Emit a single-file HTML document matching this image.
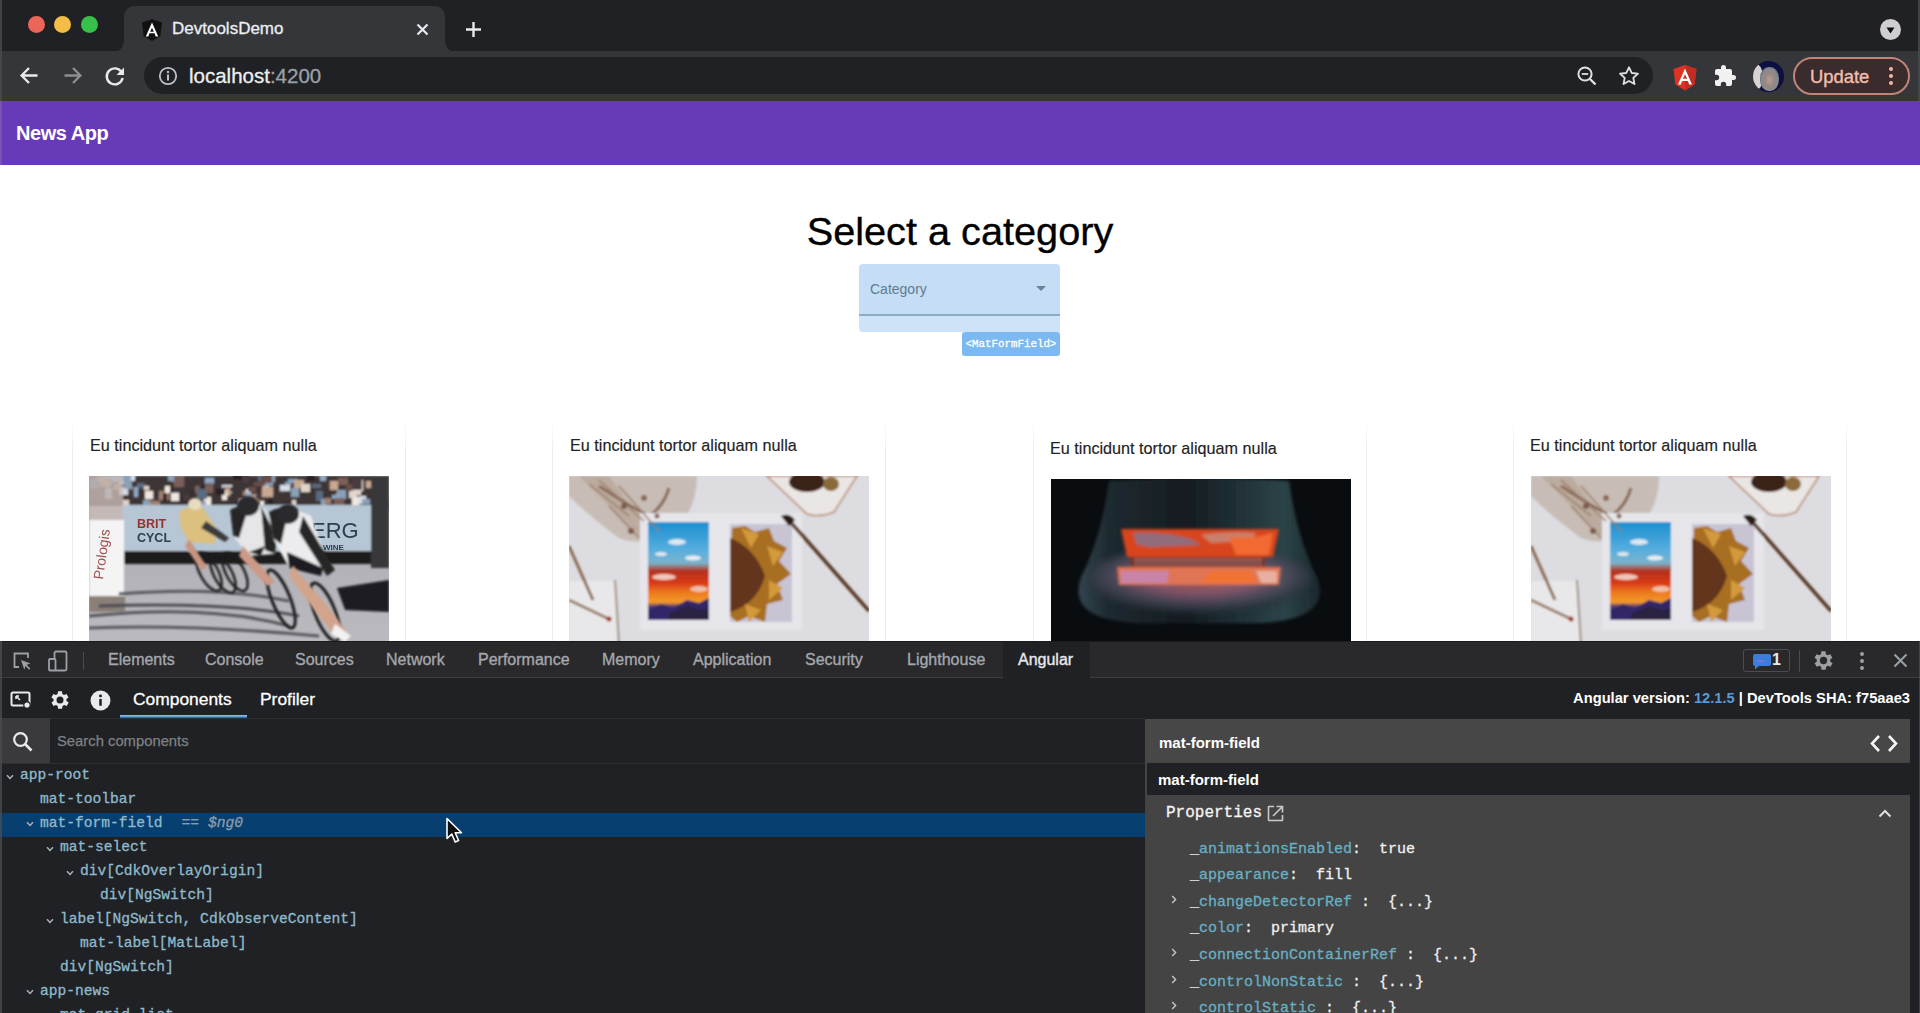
<!DOCTYPE html>
<html><head><meta charset="utf-8"><style>
*{box-sizing:border-box;margin:0;padding:0}
html,body{width:1920px;height:1013px;overflow:hidden;background:#fff;font-family:"Liberation Sans",sans-serif}
.a{position:absolute}
.mono{font-family:"Liberation Mono",monospace}
/* chrome */
#tabstrip{left:0;top:0;width:1920px;height:51px;background:#202124}
#toolbar{left:0;top:51px;width:1920px;height:50px;background:#35363a}
.tl{width:15px;height:15px;border-radius:50%;top:17px}
#tab{left:124px;top:6px;width:321px;height:46px;background:#35363a;border-radius:10px 10px 0 0}
#tab:before,#tab:after{content:"";position:absolute;bottom:0;width:10px;height:10px;background:radial-gradient(circle at 0 0,transparent 10px,#35363a 10.5px)}
#tab:before{left:-10px;background:radial-gradient(circle at 0 0,transparent 9.5px,#35363a 10px)}
#tab:after{right:-10px;background:radial-gradient(circle at 100% 0,transparent 9.5px,#35363a 10px)}
#omni{left:144px;top:57px;width:1509px;height:37px;background:#202124;border-radius:19px}
#appbar{left:0;top:101px;width:1920px;height:64px;background:#673ab7}
/* devtools */
#dt{left:0;top:641px;width:1920px;height:372px;background:#202124}
#dtbar{left:0;top:0;width:1920px;height:37px;background:#29292c;border-top:1px solid #1b1b1d;border-bottom:1px solid #3e3e40}
.dtab{top:0;height:36px;line-height:36px;font-size:16px;color:#a4a7ab;-webkit-text-stroke:0.35px currentColor}
.card{width:334px;height:260px;background:linear-gradient(to bottom,#fff,#ededed 30px) left top/1px 100% no-repeat,linear-gradient(to bottom,#fff,#ededed 30px) right top/1px 100% no-repeat}
.ctitle{font-size:16.2px;line-height:20px;color:#222;white-space:nowrap;-webkit-text-stroke:0.15px currentColor}
.img{width:300px;height:200px;overflow:hidden}
.trow{font-family:"Liberation Mono",monospace;font-size:14.6px;line-height:24px;color:#8fbacc;white-space:nowrap;-webkit-text-stroke:0.3px currentColor}
.prow{font-family:"Liberation Mono",monospace;font-size:15px;line-height:20px;color:#f0f0f0;white-space:pre;-webkit-text-stroke:0.3px currentColor}
.pk{color:#68b0c2}
</style></head><body>
<div class="a" id="tabstrip">
  <div class="a tl" style="left:28px;top:16px;width:17px;height:17px;background:#ec6559"></div>
  <div class="a tl" style="left:54px;top:16px;width:17px;height:17px;background:#f4bd46"></div>
  <div class="a tl" style="left:81px;top:16px;width:17px;height:17px;background:#37c04a"></div>
  <div class="a" id="tab">
    <svg class="a" style="left:17px;top:13px" width="22" height="24" viewBox="0 0 22 24"><path d="M11 0L21 3.6 19.4 17 11 22 2.6 17 1 3.6Z" fill="#111"/><path d="M11 3.5L4.8 17.5h2.5l1.2-3.2h5l1.2 3.2h2.5L11 3.5zm0 5.2l1.8 4H9.2z" fill="#fff"/></svg>
    <div class="a" style="left:48px;top:13.3px;font-size:17px;line-height:20px;color:#eceef0;-webkit-text-stroke:0.3px currentColor">DevtoolsDemo</div>
    <svg class="a" style="left:292px;top:17px" width="13" height="13" viewBox="0 0 13 13"><path d="M1.5 1.5L11.5 11.5M11.5 1.5L1.5 11.5" stroke="#e8eaed" stroke-width="2.2"/></svg>
  </div>
  <svg class="a" style="left:465px;top:21px" width="17" height="17" viewBox="0 0 17 17"><path d="M8.5 1V16M1 8.5H16" stroke="#e8eaed" stroke-width="2.4"/></svg>
  <div class="a" style="left:1880px;top:19px;width:21px;height:21px;border-radius:50%;background:#cfcfd1"></div>
  <svg class="a" style="left:1885px;top:26px" width="11" height="9" viewBox="0 0 11 9"><path d="M1.5 1.5H9.5L5.5 7.5Z" fill="#111"/></svg>
</div>
<div class="a" id="toolbar">
  <svg class="a" style="left:19px;top:14px" width="21" height="21" viewBox="0 0 21 21"><path d="M18.5 10.5H3M10 3L2.6 10.5 10 18" stroke="#e8eaed" stroke-width="2.3" fill="none"/></svg>
  <svg class="a" style="left:62px;top:14px" width="21" height="21" viewBox="0 0 21 21"><path d="M2.5 10.5H18M11 3L18.4 10.5 11 18" stroke="#8e8f92" stroke-width="2.3" fill="none"/></svg>
  <svg class="a" style="left:104px;top:14px" width="22" height="22" viewBox="0 0 22 22"><path d="M17.6 7.2A8 8 0 1 0 18.6 13" stroke="#e8eaed" stroke-width="2.4" fill="none"/><path d="M20 2.5V10H12.5Z" fill="#e8eaed"/></svg>
</div>
<div class="a" id="omni">
  <svg class="a" style="left:14px;top:9px" width="20" height="20" viewBox="0 0 20 20"><circle cx="10" cy="10" r="8.2" stroke="#bdc1c6" stroke-width="1.8" fill="none"/><path d="M10 8.6V14.6" stroke="#bdc1c6" stroke-width="2"/><circle cx="10" cy="6" r="1.2" fill="#bdc1c6"/></svg>
  <div class="a" style="left:45px;top:7px;font-size:20.5px;line-height:24px;color:#eceef0;white-space:nowrap;-webkit-text-stroke:0.3px currentColor">localhost<span style="color:#9aa0a6">:4200</span></div>
  <svg class="a" style="left:1432px;top:8px" width="22" height="22" viewBox="0 0 22 22"><circle cx="9" cy="9" r="6.6" stroke="#e0e0e0" stroke-width="2" fill="none"/><path d="M14 14L19.5 19.5" stroke="#e0e0e0" stroke-width="2.4"/><path d="M5.8 9H12.2" stroke="#e0e0e0" stroke-width="1.8"/></svg>
  <svg class="a" style="left:1474px;top:8px" width="22" height="22" viewBox="0 0 24 24"><path d="M12 2.5l2.9 6.2 6.8.8-5 4.6 1.3 6.7L12 17.5l-6 3.3 1.3-6.7-5-4.6 6.8-.8z" stroke="#e0e0e0" stroke-width="2" fill="none" stroke-linejoin="round"/></svg>
</div>
<svg class="a" style="left:1672px;top:64px" width="26" height="28" viewBox="0 0 26 28"><path d="M13 1L24.5 5 22.6 20.5 13 26.5 3.4 20.5 1.5 5Z" fill="#dd3324"/><path d="M13 1L24.5 5 22.6 20.5 13 26.5Z" fill="#c12d22"/><path d="M13 4.5L6 20.5h2.8l1.4-3.6h5.6l1.4 3.6H20L13 4.5zm0 5.8l2.1 4.5H10.9z" fill="#fff"/></svg>
<svg class="a" style="left:1713px;top:64px" width="24" height="24" viewBox="0 0 24 24"><path d="M20.5 11H19V7a2 2 0 0 0-2-2h-4V3.5a2.5 2.5 0 0 0-5 0V5H4a2 2 0 0 0-2 2v3.8h1.5a2.7 2.7 0 0 1 0 5.4H2V20a2 2 0 0 0 2 2h3.8v-1.5a2.7 2.7 0 0 1 5.4 0V22H17a2 2 0 0 0 2-2v-4h1.5a2.5 2.5 0 0 0 0-5z" fill="#f1f1f1"/></svg>
<div class="a" style="left:1753px;top:61px;width:31px;height:31px;border-radius:50%;overflow:hidden;background:#0c0f40"><div class="a" style="left:-4px;top:3px;width:14px;height:26px;border-radius:50%;background:#d8d4d4"></div><div class="a" style="left:7px;top:6px;width:19px;height:24px;border-radius:45%;background:radial-gradient(ellipse at 50% 55%,#b89c94 0,#968880 5px,#8a8a90 8px,#505a70 11px)"></div></div>
<div class="a" style="left:1793px;top:57px;width:117px;height:38px;border-radius:19px;border:2px solid #c08478;background:#3a2b2c"></div>
<div class="a" style="left:1810px;top:65px;font-size:18.4px;line-height:24px;color:#f1bcae;-webkit-text-stroke:0.4px currentColor">Update</div>
<svg class="a" style="left:1886px;top:65px" width="10" height="22" viewBox="0 0 10 22"><circle cx="5" cy="4" r="2" fill="#f2b8a9"/><circle cx="5" cy="11" r="2" fill="#f2b8a9"/><circle cx="5" cy="18" r="2" fill="#f2b8a9"/></svg>
<div class="a" id="appbar"><div class="a" style="left:16px;top:20px;font-size:20px;line-height:24px;color:#fff;font-weight:bold;letter-spacing:-0.45px">News App</div></div>
<div class="a" id="page" style="left:0;top:165px;width:1920px;height:476px;background:#fff;overflow:hidden">
  <div class="a" id="h1" style="left:0;top:41px;width:1920px;text-align:center;font-size:39.7px;line-height:50px;color:#000;-webkit-text-stroke:0.35px #000">Select a category</div>
  <div class="a" style="left:859px;top:99px;width:201px;height:52px;background:#c5ddf5;border-radius:4px 4px 0 0"></div>
  <div class="a" style="left:859px;top:149px;width:201px;height:1.5px;background:#8bacc4"></div>
  <div class="a" style="left:859px;top:151px;width:201px;height:16px;background:#cce3f8;border-radius:0 0 0 4px"></div>
  <div class="a" id="cat" style="left:870px;top:115px;font-size:14px;line-height:18px;color:#5e7c8e">Category</div>
  <svg class="a" style="left:1036px;top:121px" width="10" height="5" viewBox="0 0 10 5"><path d="M0 0H10L5 5Z" fill="#6a8496"/></svg>
  <div class="a" style="left:962px;top:167px;width:98px;height:24px;background:#7bb9f0;border-radius:3px;color:#fff;font-family:'Liberation Mono',monospace;font-size:10.8px;line-height:24px;text-align:center;-webkit-text-stroke:0.3px #fff">&lt;MatFormField&gt;</div>
  <div class="a card" style="left:72px;top:253px"></div>
  <div class="a card" style="left:552px;top:253px"></div>
  <div class="a card" style="left:1033px;top:253px"></div>
  <div class="a card" style="left:1513px;top:253px"></div>
  <div class="a ctitle" style="left:90px;top:269.5px">Eu tincidunt tortor aliquam nulla</div>
  <div class="a ctitle" style="left:570px;top:269.5px">Eu tincidunt tortor aliquam nulla</div>
  <div class="a ctitle" style="left:1050px;top:272.5px">Eu tincidunt tortor aliquam nulla</div>
  <div class="a ctitle" style="left:1530px;top:269.5px">Eu tincidunt tortor aliquam nulla</div>
  <div class="a img" id="img1" style="left:89px;top:311px;background:#b3b3ba"><svg width="300" height="200" viewBox="0 0 300 200">
<defs><filter id="b1" x="-10%" y="-10%" width="120%" height="120%"><feGaussianBlur stdDeviation="1.3"/></filter>
<filter id="b1s" x="-10%" y="-10%" width="120%" height="120%"><feGaussianBlur stdDeviation="0.5"/></filter>
<linearGradient id="road1" x1="0" y1="0" x2="0" y2="1"><stop offset="0" stop-color="#a9a9b0"/><stop offset="1" stop-color="#bdbdc2"/></linearGradient></defs>
<rect width="300" height="200" fill="url(#road1)"/>
<g filter="url(#b1)">
<rect x="0" y="0" width="300" height="30" fill="#3e3434"/><rect x="130" y="13" width="10" height="7" fill="#4a3a40"/><rect x="249" y="2" width="10" height="7" fill="#7a6058"/><rect x="231" y="-0" width="6" height="5" fill="#90a8c8"/><rect x="260" y="15" width="8" height="7" fill="#e0d4cc"/><rect x="190" y="14" width="5" height="4" fill="#4a3a40"/><rect x="15" y="-2" width="10" height="8" fill="#90a8c8"/><rect x="133" y="9" width="10" height="8" fill="#d8dce6"/><rect x="83" y="-3" width="5" height="9" fill="#8aa0b8"/><rect x="291" y="25" width="10" height="9" fill="#5a6a80"/><rect x="220" y="11" width="4" height="8" fill="#3a2e2e"/><rect x="115" y="21" width="7" height="11" fill="#f0e8e0"/><rect x="199" y="3" width="10" height="4" fill="#8aa0b8"/><rect x="286" y="8" width="5" height="8" fill="#90a8c8"/><rect x="196" y="6" width="6" height="4" fill="#8aa0b8"/><rect x="220" y="0" width="6" height="5" fill="#2a2226"/><rect x="134" y="11" width="9" height="5" fill="#4a3a40"/><rect x="52" y="17" width="5" height="9" fill="#3a2e2e"/><rect x="113" y="25" width="4" height="10" fill="#90a8c8"/><rect x="171" y="25" width="4" height="5" fill="#f0e8e0"/><rect x="174" y="13" width="4" height="5" fill="#e0d4cc"/><rect x="72" y="19" width="6" height="6" fill="#3a2e2e"/><rect x="18" y="3" width="8" height="4" fill="#5a6a80"/><rect x="106" y="10" width="11" height="7" fill="#7a6058"/><rect x="36" y="8" width="8" height="6" fill="#a08070"/><rect x="238" y="4" width="5" height="9" fill="#4a3a40"/><rect x="54" y="24" width="10" height="8" fill="#8aa0b8"/><rect x="10" y="0" width="8" height="6" fill="#b09080"/><rect x="205" y="4" width="10" height="8" fill="#c8a890"/><rect x="150" y="23" width="11" height="5" fill="#e0d4cc"/><rect x="162" y="21" width="8" height="6" fill="#a08070"/><rect x="218" y="-1" width="7" height="6" fill="#2a2226"/><rect x="48" y="7" width="8" height="5" fill="#5a6a80"/><rect x="37" y="10" width="6" height="9" fill="#4a3a40"/><rect x="169" y="1" width="4" height="4" fill="#5a6a80"/><rect x="203" y="24" width="4" height="8" fill="#e0d4cc"/><rect x="16" y="6" width="5" height="5" fill="#e0d4cc"/><rect x="158" y="18" width="10" height="9" fill="#b09080"/><rect x="34" y="24" width="6" height="5" fill="#e0d4cc"/><rect x="263" y="21" width="7" height="10" fill="#f0e8e0"/><rect x="144" y="-3" width="9" height="7" fill="#2a2226"/><rect x="176" y="-1" width="8" height="11" fill="#8aa0b8"/><rect x="212" y="8" width="9" height="8" fill="#e0d4cc"/><rect x="133" y="12" width="8" height="8" fill="#c8a890"/><rect x="174" y="10" width="6" height="9" fill="#e0d4cc"/><rect x="227" y="15" width="7" height="10" fill="#5a6a80"/><rect x="85" y="16" width="5" height="5" fill="#5a6a80"/><rect x="191" y="9" width="10" height="6" fill="#d8dce6"/><rect x="70" y="15" width="10" height="9" fill="#a08070"/><rect x="257" y="8" width="8" height="6" fill="#6a5048"/><rect x="36" y="7" width="10" height="4" fill="#3a2e2e"/><rect x="277" y="5" width="5" height="7" fill="#c8a890"/><rect x="270" y="20" width="7" height="8" fill="#d8dce6"/><rect x="89" y="20" width="11" height="7" fill="#3a2e2e"/><rect x="241" y="5" width="8" height="9" fill="#c8a890"/><rect x="165" y="6" width="10" height="4" fill="#6a5048"/><rect x="116" y="2" width="9" height="6" fill="#90a8c8"/><rect x="38" y="-2" width="8" height="7" fill="#d8dce6"/><rect x="154" y="15" width="7" height="5" fill="#a08070"/><rect x="55" y="10" width="5" height="4" fill="#e0d4cc"/><rect x="154" y="-2" width="6" height="9" fill="#4a3a40"/><rect x="202" y="12" width="8" height="9" fill="#8aa0b8"/><rect x="247" y="17" width="6" height="7" fill="#b09080"/><rect x="111" y="10" width="5" height="10" fill="#2a2226"/><rect x="108" y="13" width="10" height="10" fill="#5a6a80"/><rect x="133" y="15" width="5" height="9" fill="#f0e8e0"/><rect x="232" y="23" width="5" height="6" fill="#8aa0b8"/><rect x="286" y="24" width="8" height="10" fill="#5a6a80"/><rect x="74" y="17" width="4" height="8" fill="#2a2226"/><rect x="127" y="12" width="9" height="7" fill="#2a2226"/><rect x="61" y="21" width="7" height="4" fill="#4a3a40"/><rect x="95" y="19" width="5" height="5" fill="#4a3a40"/><rect x="263" y="12" width="9" height="7" fill="#e0d4cc"/><rect x="167" y="16" width="9" height="7" fill="#4a3a40"/><rect x="82" y="17" width="8" height="8" fill="#f0e8e0"/><rect x="265" y="4" width="9" height="11" fill="#f0e8e0"/><rect x="263" y="3" width="10" height="11" fill="#4a3a40"/><rect x="77" y="11" width="7" height="5" fill="#2a2226"/><rect x="175" y="-2" width="11" height="8" fill="#8aa0b8"/><rect x="157" y="25" width="5" height="5" fill="#6a5048"/><rect x="16" y="12" width="7" height="11" fill="#8aa0b8"/><rect x="76" y="10" width="5" height="7" fill="#f0e8e0"/><rect x="273" y="23" width="8" height="5" fill="#8aa0b8"/><rect x="179" y="23" width="5" height="9" fill="#2a2226"/><rect x="7" y="1" width="4" height="6" fill="#b09080"/><rect x="101" y="14" width="5" height="9" fill="#3a2e2e"/><rect x="248" y="14" width="9" height="9" fill="#8aa0b8"/><rect x="3" y="15" width="10" height="8" fill="#4a3a40"/><rect x="56" y="15" width="8" height="8" fill="#f0e8e0"/><rect x="157" y="13" width="5" height="10" fill="#d8dce6"/><rect x="236" y="22" width="6" height="6" fill="#a08070"/><rect x="61" y="25" width="10" height="5" fill="#a08070"/><rect x="35" y="-1" width="7" height="7" fill="#8aa0b8"/><rect x="157" y="17" width="5" height="8" fill="#90a8c8"/><rect x="1" y="3" width="9" height="10" fill="#5a6a80"/><rect x="30" y="11" width="9" height="8" fill="#d8dce6"/><rect x="243" y="19" width="7" height="4" fill="#90a8c8"/><rect x="159" y="11" width="8" height="5" fill="#6a5048"/><rect x="30" y="2" width="5" height="6" fill="#d8dce6"/><rect x="24" y="-1" width="11" height="7" fill="#90a8c8"/><rect x="25" y="8" width="7" height="6" fill="#a08070"/><rect x="174" y="-3" width="9" height="10" fill="#6a5048"/><rect x="117" y="7" width="7" height="10" fill="#7a6058"/><rect x="45" y="11" width="4" height="10" fill="#90a8c8"/><rect x="245" y="22" width="10" height="11" fill="#7a6058"/><rect x="173" y="11" width="11" height="10" fill="#c8a890"/><rect x="79" y="0" width="9" height="5" fill="#8aa0b8"/><rect x="35" y="6" width="8" height="7" fill="#8aa0b8"/><rect x="223" y="8" width="9" height="4" fill="#5a6a80"/><rect x="85" y="-0" width="10" height="11" fill="#7a6058"/><rect x="11" y="5" width="11" height="6" fill="#a08070"/>
<rect x="33" y="29" width="250" height="47" fill="#b6c6d4"/>
<rect x="33" y="75" width="267" height="13" fill="#1c1c1f"/>
<rect x="282" y="0" width="18" height="92" fill="#38383a"/>
<polygon points="248,112 300,104 300,136 256,134" fill="#1e1e20"/>
<path d="M0 0 H34 V44 H0Z" fill="#c9bcb6" opacity="0.8"/>
<rect x="0" y="44" width="35" height="78" fill="#f4f4f4"/>
<rect x="0" y="120" width="36" height="16" fill="#8a8078"/>
</g>
<g filter="url(#b1s)">
<text x="48" y="52" font-family="Liberation Sans" font-weight="bold" font-size="12.5" fill="#9a3030">BRIT</text>
<text x="48" y="66" font-family="Liberation Sans" font-weight="bold" font-size="12.5" fill="#2a4050">CYCL</text>
<text x="222" y="62" font-family="Liberation Sans" font-size="22" fill="#2a4050">ERG</text>
<text x="234" y="74" font-family="Liberation Sans" font-weight="bold" font-size="8" fill="#2a4050">WINE</text>
<text x="0" y="0" font-family="Liberation Sans" font-size="14" fill="#a05050" transform="translate(14 104) rotate(-82)">Prologis</text>
</g>
<g filter="url(#b1)" fill="none">
<path d="M0 140 Q120 128 200 150" stroke="#56565c" stroke-width="3"/>
<path d="M30 118 Q130 110 200 125" stroke="#5a5a60" stroke-width="3"/>
<path d="M10 130 Q140 126 210 140" stroke="#4e4e54" stroke-width="3"/>
<path d="M0 152 Q100 148 230 160" stroke="#5a5a60" stroke-width="3"/>
<ellipse cx="120" cy="96" rx="9" ry="21" stroke="#1c1c1e" stroke-width="2.5" transform="rotate(-28 120 96)"/>
<ellipse cx="134" cy="98" rx="9" ry="21" stroke="#1c1c1e" stroke-width="2.5" transform="rotate(-28 134 98)"/>
<ellipse cx="146" cy="96" rx="9" ry="21" stroke="#1c1c1e" stroke-width="2.5" transform="rotate(-28 146 96)"/>
<ellipse cx="192" cy="123" rx="9" ry="31" stroke="#1c1c1e" stroke-width="3" transform="rotate(-22 192 123)"/>
<ellipse cx="236" cy="136" rx="10" ry="31" stroke="#1c1c1e" stroke-width="3" transform="rotate(-22 236 136)"/>
</g>
<g filter="url(#b1)">
<path d="M90 36 Q100 28 114 32 L127 52 L126 68 L100 66 L92 52Z" fill="#dcc080"/>
<ellipse cx="106" cy="28" rx="7" ry="6" fill="#e8dcc0"/>
<path d="M117 45 L140 62 L136 66 L112 52Z" fill="#3a3a3a"/>
<path d="M100 63 L118 91 L112 94 L96 70Z" fill="#c89480"/>
<path d="M141 34 Q156 24 176 32 L188 62 L186 78 L160 80 L144 60Z" fill="#e6e6e8"/>
<path d="M141 34 Q150 28 160 30 L150 62 L144 60Z" fill="#262628"/>
<path d="M172 30 L188 62 L186 78 L176 74Z" fill="#262628"/>
<ellipse cx="159" cy="30" rx="11" ry="10" fill="#2a2a2e"/>
<path d="M154 70 L186 106 L178 110 L150 80Z" fill="#cc9a86"/>
<path d="M160 76 L172 80 L176 70Z" fill="#202022"/>
<path d="M180 36 Q196 28 222 40 L234 74 L232 92 L200 92 L184 62Z" fill="#ececee"/>
<path d="M180 36 Q190 30 200 32 L192 68 L184 62Z" fill="#262628"/>
<path d="M214 40 L246 94 L238 100 L210 56Z" fill="#262628"/>
<ellipse cx="199" cy="38" rx="11" ry="10" fill="#2a2a2e"/>
<path d="M198 76 L234 92 L232 100 L200 92Z" fill="#1e1e20"/>
<path d="M204 90 L240 132 L258 156 L248 162 L230 140 L200 100Z" fill="#d2a48c"/>
<path d="M246 148 L262 160 L256 166 L242 158Z" fill="#f2f2f2"/>
</g>
</svg></div>
  <div class="a img" id="img2" style="left:569px;top:311px;background:#dcdde2"><svg width="300" height="200" viewBox="0 0 300 200">
<defs><filter id="bP" x="-10%" y="-10%" width="120%" height="120%"><feGaussianBlur stdDeviation="1.1"/></filter>
<linearGradient id="skyP" x1="0" y1="0" x2="0" y2="1">
<stop offset="0" stop-color="#1b8fd0"/><stop offset="0.28" stop-color="#55aede"/><stop offset="0.42" stop-color="#7cb2cc"/>
<stop offset="0.5" stop-color="#b4301c"/><stop offset="0.62" stop-color="#d83a18"/><stop offset="0.72" stop-color="#ee7a1e"/><stop offset="0.82" stop-color="#f29a2a"/><stop offset="0.86" stop-color="#5a3a78"/><stop offset="1" stop-color="#3a2a70"/></linearGradient></defs>
<rect width="300" height="200" fill="#dcdce1"/>
<g filter="url(#bP)">
<path d="M0 0H128 Q128 40 96 60 Q70 70 50 62 Q20 40 0 20Z" fill="#c7bdb6"/>
<path d="M10 0 L70 60 L85 62 L40 0Z" fill="#b8a89a" opacity="0.8"/>
<path d="M30 10 Q60 30 80 40 Q95 30 100 12" stroke="#8a6a58" stroke-width="3" fill="none"/>
<path d="M198 0 H288 L265 36 Q250 42 238 38Z" fill="#e9e6e4" stroke="#b88a70" stroke-width="1.5"/>
<ellipse cx="238" cy="6" rx="18" ry="10" fill="#3a2418"/>
<ellipse cx="262" cy="8" rx="8" ry="7" fill="#8a6a3a"/>
<rect x="71" y="37" width="162" height="117" fill="#e6e6ea"/>
<rect x="79" y="46" width="61" height="98" fill="url(#skyP)"/>
<path d="M79 134 L92 128 L104 132 L118 124 L130 127 L140 122 V144 H79Z" fill="#322868"/>
<path d="M100 138 L118 130 L132 134 L140 132 V144 H100Z" fill="#2a2040"/>
<ellipse cx="108" cy="66" rx="9" ry="3" fill="#dde8f0"/><ellipse cx="92" cy="78" rx="6" ry="2" fill="#dde8f0"/><ellipse cx="124" cy="82" rx="8" ry="2.5" fill="#e6eef2"/>
<ellipse cx="95" cy="101" rx="12" ry="3" fill="#f0c8b8"/><ellipse cx="130" cy="113" rx="9" ry="3" fill="#f0c0a8"/>
<rect x="161" y="48" width="62" height="98" fill="#c8c4d4"/>
<path d="M163 52 L176 50 L186 56 L200 52 L205 65 L218 72 L210 85 L222 98 L208 108 L214 124 L198 128 L196 146 L180 140 L168 146 L161 140Z" fill="#a86e24"/>
<path d="M161 62 Q186 72 196 100 Q188 128 161 136Z" fill="#62361a"/>
<path d="M172 52 L190 58 L182 72Z M198 70 L214 76 L204 90Z M200 104 L214 112 L200 124Z M176 128 L192 134 L180 146Z" fill="#d39a3a"/>
<path d="M218 42 L300 135" stroke="#5a3a28" stroke-width="3.5"/>
<path d="M212 40 Q220 36 226 44 L220 50Z" fill="#2a1a14"/>
<path d="M0 105 H48 V200 H0Z" fill="#e8e8ea"/>
<path d="M46 104 L50 170" stroke="#a09080" stroke-width="2"/>
<path d="M0 70 L24 124" stroke="#8a6a50" stroke-width="3"/>
<path d="M0 124 L40 143" stroke="#9a7a60" stroke-width="3"/>
<circle cx="40" cy="143" r="2.5" fill="#a03020"/>
<path d="M20 8 L60 40 M30 4 L75 45 M50 10 L90 55 M40 30 L70 62" stroke="#9a7a66" stroke-width="2" opacity="0.7"/>
<circle cx="55" cy="30" r="3" fill="#7a5a48"/><circle cx="75" cy="22" r="3" fill="#8a6a58"/><circle cx="62" cy="55" r="3" fill="#7a5a48"/><circle cx="88" cy="40" r="2.5" fill="#8a6a58"/>
</g>
</svg></div>
  <div class="a img" id="img3" style="left:1051px;top:314px;background:#0c1114"><svg width="300" height="200" viewBox="0 0 300 200">
<defs><filter id="b3" x="-10%" y="-10%" width="120%" height="120%"><feGaussianBlur stdDeviation="1.5"/></filter>
<filter id="b3b" x="-30%" y="-30%" width="160%" height="160%"><feGaussianBlur stdDeviation="7"/></filter>
<filter id="b3c" x="-30%" y="-30%" width="160%" height="160%"><feGaussianBlur stdDeviation="3"/></filter>
<linearGradient id="ch3" x1="0" y1="0" x2="1" y2="0"><stop offset="0" stop-color="#33454e"/><stop offset="0.12" stop-color="#1f2a30"/><stop offset="0.45" stop-color="#151c21"/><stop offset="0.7" stop-color="#22343a"/><stop offset="0.85" stop-color="#2c4448"/><stop offset="1" stop-color="#1a272c"/></linearGradient>
<radialGradient id="seat3" cx="0.5" cy="0.45" r="0.55"><stop offset="0" stop-color="#d06a50"/><stop offset="0.45" stop-color="#a0607a"/><stop offset="0.75" stop-color="#4a4a5a"/><stop offset="1" stop-color="#1e2a30"/></radialGradient></defs>
<rect width="300" height="200" fill="#0a0d10"/>
<g filter="url(#b3)">
<path d="M58 2 Q150 -4 238 2 Q246 60 266 98 Q282 140 210 144 H90 Q15 142 30 98 Q50 60 58 2Z" fill="url(#ch3)"/>
</g>
<ellipse cx="148" cy="100" rx="112" ry="34" fill="url(#seat3)" opacity="0.8" filter="url(#b3c)"/>
<g filter="url(#b3)">
<path d="M70 50 H228 L222 78 H76Z" fill="#d8441c"/>
<path d="M82 54 Q110 52 140 60 L150 66 L100 68 L86 66Z" fill="#7a7a9a" opacity="0.75"/>
<path d="M150 56 Q175 52 205 54 L200 62 L160 64Z" fill="#c0a8a0" opacity="0.6"/>
<path d="M178 58 Q200 60 222 54 L218 76 L185 76Z" fill="#f26a30"/>
<rect x="80" y="78" width="134" height="11" fill="#7a3028"/>
<path d="M84 81 H210" stroke="#c8a8a8" stroke-width="1.5" stroke-dasharray="2 2"/>
<path d="M84 85 H210" stroke="#b89898" stroke-width="1.5" stroke-dasharray="2 2"/>
<path d="M66 88 H230 L228 106 H68Z" fill="#e07454"/>
<path d="M70 92 L118 92 L116 104 L70 104Z" fill="#c884a8"/>
<path d="M160 92 L200 92 L205 104 L150 104Z" fill="#f27230"/>
<path d="M205 92 L226 92 L226 104 L210 104Z" fill="#e8b0a0"/>
</g>
</svg></div>
  <div class="a img" id="img4" style="left:1531px;top:311px;background:#dcdde2"><svg width="300" height="200" viewBox="0 0 300 200">
<defs><filter id="bP4" x="-10%" y="-10%" width="120%" height="120%"><feGaussianBlur stdDeviation="1.1"/></filter>
<linearGradient id="skyP4" x1="0" y1="0" x2="0" y2="1">
<stop offset="0" stop-color="#1b8fd0"/><stop offset="0.28" stop-color="#55aede"/><stop offset="0.42" stop-color="#7cb2cc"/>
<stop offset="0.5" stop-color="#b4301c"/><stop offset="0.62" stop-color="#d83a18"/><stop offset="0.72" stop-color="#ee7a1e"/><stop offset="0.82" stop-color="#f29a2a"/><stop offset="0.86" stop-color="#5a3a78"/><stop offset="1" stop-color="#3a2a70"/></linearGradient></defs>
<rect width="300" height="200" fill="#dcdce1"/>
<g filter="url(#bP4)">
<path d="M0 0H128 Q128 40 96 60 Q70 70 50 62 Q20 40 0 20Z" fill="#c7bdb6"/>
<path d="M10 0 L70 60 L85 62 L40 0Z" fill="#b8a89a" opacity="0.8"/>
<path d="M30 10 Q60 30 80 40 Q95 30 100 12" stroke="#8a6a58" stroke-width="3" fill="none"/>
<path d="M198 0 H288 L265 36 Q250 42 238 38Z" fill="#e9e6e4" stroke="#b88a70" stroke-width="1.5"/>
<ellipse cx="238" cy="6" rx="18" ry="10" fill="#3a2418"/>
<ellipse cx="262" cy="8" rx="8" ry="7" fill="#8a6a3a"/>
<rect x="71" y="37" width="162" height="117" fill="#e6e6ea"/>
<rect x="79" y="46" width="61" height="98" fill="url(#skyP4)"/>
<path d="M79 134 L92 128 L104 132 L118 124 L130 127 L140 122 V144 H79Z" fill="#322868"/>
<path d="M100 138 L118 130 L132 134 L140 132 V144 H100Z" fill="#2a2040"/>
<ellipse cx="108" cy="66" rx="9" ry="3" fill="#dde8f0"/><ellipse cx="92" cy="78" rx="6" ry="2" fill="#dde8f0"/><ellipse cx="124" cy="82" rx="8" ry="2.5" fill="#e6eef2"/>
<ellipse cx="95" cy="101" rx="12" ry="3" fill="#f0c8b8"/><ellipse cx="130" cy="113" rx="9" ry="3" fill="#f0c0a8"/>
<rect x="161" y="48" width="62" height="98" fill="#c8c4d4"/>
<path d="M163 52 L176 50 L186 56 L200 52 L205 65 L218 72 L210 85 L222 98 L208 108 L214 124 L198 128 L196 146 L180 140 L168 146 L161 140Z" fill="#a86e24"/>
<path d="M161 62 Q186 72 196 100 Q188 128 161 136Z" fill="#62361a"/>
<path d="M172 52 L190 58 L182 72Z M198 70 L214 76 L204 90Z M200 104 L214 112 L200 124Z M176 128 L192 134 L180 146Z" fill="#d39a3a"/>
<path d="M218 42 L300 135" stroke="#5a3a28" stroke-width="3.5"/>
<path d="M212 40 Q220 36 226 44 L220 50Z" fill="#2a1a14"/>
<path d="M0 105 H48 V200 H0Z" fill="#e8e8ea"/>
<path d="M46 104 L50 170" stroke="#a09080" stroke-width="2"/>
<path d="M0 70 L24 124" stroke="#8a6a50" stroke-width="3"/>
<path d="M0 124 L40 143" stroke="#9a7a60" stroke-width="3"/>
<circle cx="40" cy="143" r="2.5" fill="#a03020"/>
<path d="M20 8 L60 40 M30 4 L75 45 M50 10 L90 55 M40 30 L70 62" stroke="#9a7a66" stroke-width="2" opacity="0.7"/>
<circle cx="55" cy="30" r="3" fill="#7a5a48"/><circle cx="75" cy="22" r="3" fill="#8a6a58"/><circle cx="62" cy="55" r="3" fill="#7a5a48"/><circle cx="88" cy="40" r="2.5" fill="#8a6a58"/>
</g>
</svg></div>
</div>
<div class="a" id="dt">
  <div class="a" id="dtbar">
    <svg class="a" style="left:12px;top:9px" width="20" height="20" viewBox="0 0 20 20"><path d="M7 16H2.5V2.5H16V7" stroke="#9aa0a6" stroke-width="1.8" fill="none"/><path d="M9 9L18.5 12.5 14.6 13.8 18.3 17.6 17.2 18.7 13.5 14.9 12.3 18.7Z" fill="#9aa0a6"/></svg>
    <svg class="a" style="left:47px;top:8px" width="22" height="22" viewBox="0 0 22 22"><rect x="7.5" y="1.5" width="12" height="19" rx="1.5" stroke="#9aa0a6" stroke-width="1.8" fill="none"/><rect x="2" y="9" width="6.5" height="11.5" rx="1" stroke="#9aa0a6" stroke-width="1.8" fill="#292a2d"/></svg>
    <div class="a" style="left:83px;top:10px;width:1px;height:18px;background:#4a4b4e"></div>
    <div class="a dtab" style="left:108px">Elements</div>
    <div class="a dtab" style="left:205px">Console</div>
    <div class="a dtab" style="left:295px">Sources</div>
    <div class="a dtab" style="left:386px">Network</div>
    <div class="a dtab" style="left:478px">Performance</div>
    <div class="a dtab" style="left:602px">Memory</div>
    <div class="a dtab" style="left:693px">Application</div>
    <div class="a dtab" style="left:805px">Security</div>
    <div class="a dtab" style="left:907px">Lighthouse</div>
    <div class="a" style="left:1003px;top:0;width:87px;height:36px;background:#202124"></div>
    <div class="a dtab" style="left:1018px;color:#e8eaed">Angular</div>
    <div class="a" style="left:1743px;top:7px;width:47px;height:23px;border:1px solid #4d4d50;border-radius:3px"></div>
    <svg class="a" style="left:1752px;top:11px" width="20" height="17" viewBox="0 0 20 17"><path d="M3 1H17A2 2 0 0 1 19 3V11A2 2 0 0 1 17 13H7L3 16.5V13A2 2 0 0 1 1 11V3A2 2 0 0 1 3 1Z" fill="#3b7ddd"/><path d="M5 8H12" stroke="#a96fe0" stroke-width="1.2"/></svg>
    <div class="a" style="left:1772px;top:8px;font-size:16px;line-height:20px;color:#e8eaed;font-weight:bold">1</div>
    <div class="a" style="left:1799px;top:8px;width:1px;height:22px;background:#4a4b4e"></div>
    <svg class="a" style="left:1811px;top:6px" width="25" height="25" viewBox="0 0 24 24"><path d="M19.4 13a7.8 7.8 0 0 0 0-2l2.1-1.6-2-3.5-2.5 1a7.6 7.6 0 0 0-1.7-1L15 3.2h-4l-.4 2.7a7.6 7.6 0 0 0-1.7 1l-2.5-1-2 3.5L6.6 11a7.8 7.8 0 0 0 0 2l-2.1 1.6 2 3.5 2.5-1a7.6 7.6 0 0 0 1.7 1l.4 2.7h4l.4-2.7a7.6 7.6 0 0 0 1.7-1l2.5 1 2-3.5zM13 15.5a3.5 3.5 0 1 1 0-7 3.5 3.5 0 0 1 0 7z" transform="translate(-1 0)" fill="#9aa0a6"/></svg>
    <svg class="a" style="left:1857px;top:9px" width="10" height="20" viewBox="0 0 10 20"><circle cx="5" cy="3" r="2" fill="#9aa0a6"/><circle cx="5" cy="10" r="2" fill="#9aa0a6"/><circle cx="5" cy="17" r="2" fill="#9aa0a6"/></svg>
    <svg class="a" style="left:1893px;top:11px" width="15" height="15" viewBox="0 0 15 15"><path d="M1.5 1.5L13.5 13.5M13.5 1.5L1.5 13.5" stroke="#9aa0a6" stroke-width="2"/></svg>
  </div>
  <div class="a" id="nghead" style="left:0;top:37px;width:1920px;height:40px;background:#202124">
    <svg class="a" style="left:10px;top:12px" width="22" height="20" viewBox="0 0 22 20"><rect x="1.5" y="2.5" width="18" height="13" rx="1.5" stroke="#e8eaed" stroke-width="2" fill="none"/><path d="M6 6L10 10M6 6V9M6 6H9" stroke="#e8eaed" stroke-width="1.6" fill="none"/><circle cx="17" cy="15" r="3.2" fill="#e8eaed" stroke="#202124" stroke-width="1.2"/></svg>
    <svg class="a" style="left:48px;top:10px" width="24" height="24" viewBox="0 0 24 24"><path d="M19.4 13a7.8 7.8 0 0 0 0-2l2.1-1.6-2-3.5-2.5 1a7.6 7.6 0 0 0-1.7-1L15 3.2h-4l-.4 2.7a7.6 7.6 0 0 0-1.7 1l-2.5-1-2 3.5L6.6 11a7.8 7.8 0 0 0 0 2l-2.1 1.6 2 3.5 2.5-1a7.6 7.6 0 0 0 1.7 1l.4 2.7h4l.4-2.7a7.6 7.6 0 0 0 1.7-1l2.5 1 2-3.5zM13 15.5a3.5 3.5 0 1 1 0-7 3.5 3.5 0 0 1 0 7z" transform="translate(-1 0)" fill="#e8eaed"/></svg>
    <svg class="a" style="left:89.5px;top:12px" width="21" height="21" viewBox="0 0 20 20"><circle cx="10" cy="10" r="9.5" fill="#e8eaed"/><rect x="8.8" y="8.5" width="2.4" height="6.5" fill="#202124"/><circle cx="10" cy="5.6" r="1.4" fill="#202124"/></svg>
    <div class="a" style="left:133px;top:10px;font-size:17.4px;line-height:22px;color:#fff;-webkit-text-stroke:0.3px currentColor">Components</div>
    <div class="a" style="left:120px;top:37px;width:127px;height:3px;background:linear-gradient(#9cc4ee,#5d95d2 60%,#1d4f8c)"></div>
    <div class="a" style="left:260px;top:10px;font-size:17.4px;line-height:22px;color:#fff;-webkit-text-stroke:0.3px currentColor">Profiler</div>
    <div class="a" id="ngver" style="right:10px;top:10px;font-size:14.7px;line-height:20px;color:#fff;font-weight:bold;white-space:nowrap">Angular version: <span style="color:#5b9bd5">12.1.5</span> | DevTools SHA: f75aae3</div>
  </div>
  <div class="a" style="left:0;top:77px;width:1145px;height:45px;background:#202124;border-top:1px solid #2e2f32"></div>
  <div class="a" style="left:0;top:77px;width:50px;height:45px;background:#3a3a3c"></div>
  <svg class="a" style="left:12px;top:90px" width="22" height="22" viewBox="0 0 22 22"><circle cx="8.5" cy="8.5" r="6.3" stroke="#e8eaed" stroke-width="2.2" fill="none"/><path d="M13 13L19.5 19.5" stroke="#e8eaed" stroke-width="2.6"/></svg>
  <div class="a" style="left:57px;top:91px;font-size:14.8px;line-height:18px;color:#7f8184;-webkit-text-stroke:0.25px currentColor">Search components</div>
  <div class="a" style="left:0;top:122px;width:1145px;height:1px;background:#2e2f32"></div>
  <div class="a" id="tree" style="left:0;top:123px;width:1145px;height:249px;background:#202124;overflow:hidden">
    <svg class="a" style="left:6px;top:10px" width="8" height="6" viewBox="0 0 8 6"><path d="M1 1.2L4 4.4 7 1.2" stroke="#a9b4bc" stroke-width="1.5" fill="none"/></svg>
    <div class="a trow" style="left:20px;top:-1px">app-root</div>
    <div class="a trow" style="left:40px;top:23px">mat-toolbar</div>
    <div class="a" style="left:0;top:49px;width:1147px;height:24px;background:#073f71"></div>
    <svg class="a" style="left:26px;top:56.5px" width="8" height="6" viewBox="0 0 8 6"><path d="M1 1.2L4 4.4 7 1.2" stroke="#a9b4bc" stroke-width="1.5" fill="none"/></svg>
    <div class="a trow" style="left:40px;top:47px">mat-form-field<span style="color:#8a9cab;font-style:italic;margin-left:19px">== $ng0</span></div>
    <svg class="a" style="left:46px;top:82px" width="8" height="6" viewBox="0 0 8 6"><path d="M1 1.2L4 4.4 7 1.2" stroke="#a9b4bc" stroke-width="1.5" fill="none"/></svg>
    <div class="a trow" style="left:60px;top:71px">mat-select</div>
    <svg class="a" style="left:66px;top:106px" width="8" height="6" viewBox="0 0 8 6"><path d="M1 1.2L4 4.4 7 1.2" stroke="#a9b4bc" stroke-width="1.5" fill="none"/></svg>
    <div class="a trow" style="left:80px;top:95px">div[CdkOverlayOrigin]</div>
    <div class="a trow" style="left:100px;top:119px">div[NgSwitch]</div>
    <svg class="a" style="left:46px;top:154px" width="8" height="6" viewBox="0 0 8 6"><path d="M1 1.2L4 4.4 7 1.2" stroke="#a9b4bc" stroke-width="1.5" fill="none"/></svg>
    <div class="a trow" style="left:60px;top:143px">label[NgSwitch, CdkObserveContent]</div>
    <div class="a trow" style="left:80px;top:167px">mat-label[MatLabel]</div>
    <div class="a trow" style="left:60px;top:191px">div[NgSwitch]</div>
    <svg class="a" style="left:26px;top:224.5px" width="8" height="6" viewBox="0 0 8 6"><path d="M1 1.2L4 4.4 7 1.2" stroke="#a9b4bc" stroke-width="1.5" fill="none"/></svg>
    <div class="a trow" style="left:40px;top:215px">app-news</div>
    <div class="a trow" style="left:60px;top:239px">mat-grid-list</div>
  </div>
  <div class="a" id="rp" style="left:1145px;top:77px;width:775px;height:295px;background:#202124"><div class="a" style="left:0;top:1px;width:765px;height:294px;background:#444"></div>
    <div class="a" style="left:0;top:1px;width:765px;height:43px;background:#474747"></div>
    <div class="a" style="left:14px;top:15.5px;font-size:15px;line-height:18px;color:#fff;font-weight:bold">mat-form-field</div>
    <svg class="a" style="left:724px;top:16px" width="30" height="19" viewBox="0 0 30 19"><path d="M10 2L3 9.5 10 17M20 2L27 9.5 20 17" stroke="#f4f4f4" stroke-width="2.6" fill="none"/></svg>
    <div class="a" style="left:2px;top:45px;width:763px;height:32px;background:#202124"></div>
    <div class="a" style="left:13px;top:53px;font-size:15px;line-height:18px;color:#fff;font-weight:bold">mat-form-field</div>
    <div class="a" style="left:2px;top:77px;width:763px;height:218px;background:#444"></div>
    <div class="a prow" style="left:21px;top:85px;font-size:16px;color:#f4f4f4">Properties</div>
    <svg class="a" style="left:122px;top:87px" width="17" height="17" viewBox="0 0 17 17"><path d="M7 1.5H2A.5.5 0 0 0 1.5 2V15A.5.5 0 0 0 2 15.5H15A.5.5 0 0 0 15.5 15V10" stroke="#c9c9c9" stroke-width="1.6" fill="none"/><path d="M6 11L15 2M9.5 1.5H15.5V7.5" stroke="#c9c9c9" stroke-width="1.6" fill="none"/></svg>
    <svg class="a" style="left:733px;top:91px" width="14" height="9" viewBox="0 0 14 9"><path d="M1.5 7.5L7 2 12.5 7.5" stroke="#e0e0e0" stroke-width="2" fill="none"/></svg>
    <div class="a prow" style="left:45px;top:121.5px">_<span class="pk">animationsEnabled</span>:  true</div>
    <div class="a prow" style="left:45px;top:148.1px">_<span class="pk">appearance</span>:  fill</div>
    <svg class="a" style="left:26px;top:176.7px" width="6" height="9" viewBox="0 0 6 9"><path d="M1.2 1L4.6 4.5 1.2 8" stroke="#c8c8c8" stroke-width="1.4" fill="none"/></svg>
    <div class="a prow" style="left:45px;top:174.7px">_<span class="pk">changeDetectorRef</span> :  {...}</div>
    <div class="a prow" style="left:45px;top:201.3px">_<span class="pk">color</span>:  primary</div>
    <svg class="a" style="left:26px;top:229.9px" width="6" height="9" viewBox="0 0 6 9"><path d="M1.2 1L4.6 4.5 1.2 8" stroke="#c8c8c8" stroke-width="1.4" fill="none"/></svg>
    <div class="a prow" style="left:45px;top:227.9px">_<span class="pk">connectionContainerRef</span> :  {...}</div>
    <svg class="a" style="left:26px;top:256.5px" width="6" height="9" viewBox="0 0 6 9"><path d="M1.2 1L4.6 4.5 1.2 8" stroke="#c8c8c8" stroke-width="1.4" fill="none"/></svg>
    <div class="a prow" style="left:45px;top:254.5px">_<span class="pk">controlNonStatic</span> :  {...}</div>
    <svg class="a" style="left:26px;top:283.1px" width="6" height="9" viewBox="0 0 6 9"><path d="M1.2 1L4.6 4.5 1.2 8" stroke="#c8c8c8" stroke-width="1.4" fill="none"/></svg>
    <div class="a prow" style="left:45px;top:281.1px">_<span class="pk">controlStatic</span> :  {...}</div>
  </div>
</div>
<svg class="a" style="left:445px;top:817px" width="18" height="27" viewBox="0 0 18 27"><path d="M2 1.5V21.5L6.8 17 10.2 25 13.6 23.5 10.2 15.8H16.5Z" fill="#111" stroke="#fff" stroke-width="1.6" stroke-linejoin="round"/></svg>
<div class="a" style="left:0;top:0;width:2px;height:101px;background:rgba(75,76,80,0.8)"></div><div class="a" style="left:0;top:101px;width:2px;height:64px;background:rgba(128,100,170,0.6)"></div><div class="a" style="left:0;top:641px;width:2px;height:372px;background:rgba(75,76,80,0.8)"></div>
<div class="a" style="left:1918px;top:0;width:2px;height:101px;background:rgba(75,76,80,0.8)"></div><div class="a" style="left:1918.5px;top:641px;width:1.5px;height:372px;background:rgba(75,76,80,0.8)"></div>
</body></html>
